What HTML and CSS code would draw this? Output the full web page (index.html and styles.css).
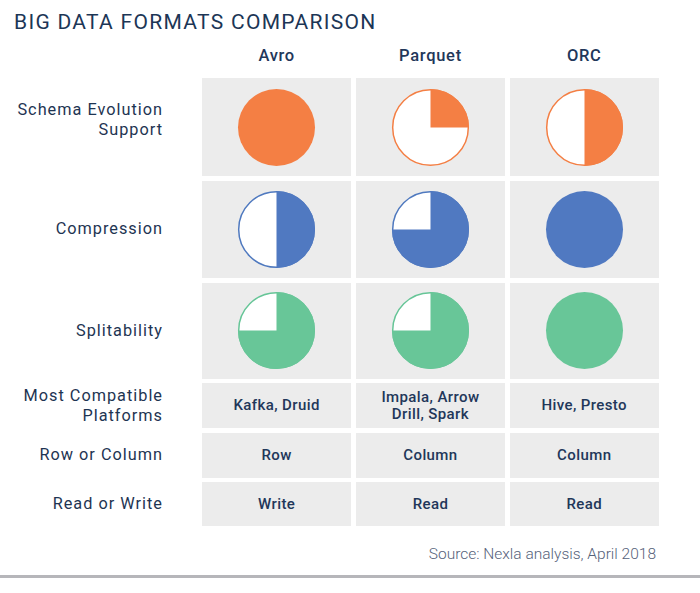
FILE: index.html
```html
<!DOCTYPE html>
<html>
<head>
<meta charset="utf-8">
<link rel="stylesheet" href="styles.css">
</head>
<body>
<h1 class="title">BIG DATA FORMATS COMPARISON</h1>
<div class="grid">
  <div class="corner"></div>
  <div class="head">Avro</div>
  <div class="head">Parquet</div>
  <div class="head">ORC</div>

  <div class="label label-up">Schema Evolution<br>Support</div>
  <div class="cell"><svg class="pie orange" viewBox="0 0 80 80"><circle cx="40" cy="40" r="39" class="fill"/></svg></div>
  <div class="cell"><svg class="pie orange" viewBox="0 0 80 80"><circle cx="40" cy="40" r="38.3" class="ring"/><path class="fill" d="M40 40 L40 1 A39 39 0 0 1 79 40 Z"/></svg></div>
  <div class="cell"><svg class="pie orange" viewBox="0 0 80 80"><circle cx="40" cy="40" r="38.3" class="ring"/><path class="fill" d="M40 1 A39 39 0 0 1 40 79 Z"/></svg></div>

  <div class="label">Compression</div>
  <div class="cell"><svg class="pie blue" viewBox="0 0 80 80"><circle cx="40" cy="40" r="38.3" class="ring"/><path class="fill" d="M40 1 A39 39 0 0 1 40 79 Z"/></svg></div>
  <div class="cell"><svg class="pie blue" viewBox="0 0 80 80"><circle cx="40" cy="40" r="38.3" class="ring"/><path class="fill" d="M40 40 L40 1 A39 39 0 1 1 1 40 Z"/></svg></div>
  <div class="cell"><svg class="pie blue" viewBox="0 0 80 80"><circle cx="40" cy="40" r="39" class="fill"/></svg></div>

  <div class="label">Splitability</div>
  <div class="cell"><svg class="pie green" viewBox="0 0 80 80"><circle cx="40" cy="40" r="38.3" class="ring"/><path class="fill" d="M40 40 L40 1 A39 39 0 1 1 1 40 Z"/></svg></div>
  <div class="cell"><svg class="pie green" viewBox="0 0 80 80"><circle cx="40" cy="40" r="38.3" class="ring"/><path class="fill" d="M40 40 L40 1 A39 39 0 1 1 1 40 Z"/></svg></div>
  <div class="cell"><svg class="pie green" viewBox="0 0 80 80"><circle cx="40" cy="40" r="39" class="fill"/></svg></div>

  <div class="label">Most Compatible<br>Platforms</div>
  <div class="cell text">Kafka, Druid</div>
  <div class="cell text">Impala, Arrow<br>Drill, Spark</div>
  <div class="cell text">Hive, Presto</div>

  <div class="label">Row or Column</div>
  <div class="cell text">Row</div>
  <div class="cell text">Column</div>
  <div class="cell text">Column</div>

  <div class="label">Read or Write</div>
  <div class="cell text">Write</div>
  <div class="cell text">Read</div>
  <div class="cell text">Read</div>
</div>
<p class="source">Source: Nexla analysis, April 2018</p>
<div class="rule"></div>
</body>
</html>
```

FILE: styles.css
```css
html, body {
  margin: 0;
  padding: 0;
  background: #ffffff;
}
body {
  font-family: Roboto, "Liberation Sans", sans-serif;
  color: #1e3452;
  width: 700px;
}
.title {
  margin: 0;
  padding: 10px 0 0 14px;
  font-size: 21px;
  line-height: 24px;
  font-weight: 400;
  color: #1c3656;
  letter-spacing: 1.3px;
}
.grid {
  display: grid;
  grid-template-columns: 197.5px 149.3px 149.3px 149.3px;
  grid-template-rows: 39.5px 98px 97.5px 96px 45px 45px 44px;
  column-gap: 4.5px;
  row-gap: 4.5px;
}
.head {
  display: flex;
  align-items: flex-end;
  justify-content: center;
  padding-bottom: 8px;
  font-size: 16.5px;
  line-height: 20px;
  font-weight: 500;
  letter-spacing: 0.7px;
  color: #22375a;
}
.label {
  display: flex;
  align-items: center;
  justify-content: flex-end;
  text-align: right;
  padding-right: 34.5px;
  font-size: 16.3px;
  line-height: 20px;
  font-weight: 400;
  letter-spacing: 1px;
  color: #1e3452;
}
.label-up {
  padding-bottom: 14px;
}
.cell {
  background: #ececec;
  display: flex;
  align-items: center;
  justify-content: center;
}
.text {
  font-size: 15px;
  line-height: 17px;
  font-weight: 500;
  letter-spacing: 0.4px;
  text-align: center;
  color: #22375a;
}
.pie {
  width: 79px;
  height: 79px;
  display: block;
}
.pie .ring {
  fill: #ffffff;
  stroke-width: 1.5;
}
.orange .ring { stroke: #f47f44; }
.orange .fill { fill: #f47f44; }
.blue .ring { stroke: #4f79bf; }
.blue .fill { fill: #5079c1; }
.green .ring { stroke: #66c597; }
.green .fill { fill: #68c698; }
.source {
  margin: 18px 0 0 0;
  padding-right: 44px;
  text-align: right;
  font-size: 15.5px;
  line-height: 20px;
  font-weight: 300;
  color: #56627a;
}
.rule {
  margin-top: 11px;
  height: 3px;
  background: #b6b6ba;
}
```
